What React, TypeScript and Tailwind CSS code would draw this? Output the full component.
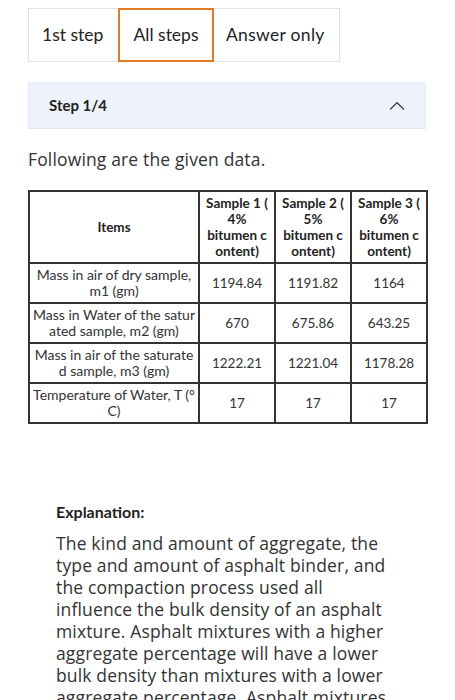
import React from "react";

const rows: [React.ReactNode, string, string, string][] = [
  [<>Mass in air of dry sample,<br />m1 (gm)</>, "1194.84", "1191.82", "1164"],
  [<>Mass in Water of the satur<br />ated sample, m2 (gm)</>, "670", "675.86", "643.25"],
  [<>Mass in air of the saturate<br />d sample, m3 (gm)</>, "1222.21", "1221.04", "1178.28"],
  [<>Temperature of Water, T (°<br />C)</>, "17", "17", "17"],
];

const heads = ["1", "2", "3"];
const pcts = ["4%", "5%", "6%"];

export default function App() {
  return (
    <div className="w-[455px] h-[700px] overflow-hidden bg-white text-[#333] font-['Lato','Open_Sans',sans-serif]">
      <div className="pt-2 pl-7">
        <div className="flex w-[312px] h-[54px] border border-[#e3e3e3]">
          <div className="w-[89px] flex items-center pl-[13px] text-[17.5px] text-[#222]">1st step</div>
          <div className="w-[96px] flex items-center justify-center text-[17.5px] text-[#222] border-2 border-[#e07a26] -my-px">All steps</div>
          <div className="flex-1 flex items-center pl-[12px] text-[17.5px] text-[#222] tracking-[0.3px]">Answer only</div>
        </div>
      </div>
      <div className="mt-5 ml-7 w-[398px] h-[47px] bg-[#eef2fc] border border-[#e6eaf4] flex items-center justify-between pl-5 pr-5">
        <span className="text-[15px] font-bold text-[#222]">Step 1/4</span>
        <svg width="16" height="10" viewBox="0 0 16 10" fill="none" stroke="#444" strokeWidth="1.4">
          <path d="M1 8.5 L8 1.8 L15 8.5" />
        </svg>
      </div>
      <p className="ml-7 mt-[19px] text-[17.5px] tracking-[0.15px] leading-[22px] text-[#333] font-['Open_Sans',sans-serif]">Following are the given data.</p>
      <table className="ml-7 mt-[20px] border-collapse text-[13.5px] leading-[16px] text-[#333] text-center w-[398px] table-fixed">
        <colgroup>
          <col className="w-[170px]" />
          <col className="w-[76px]" />
          <col className="w-[76px]" />
          <col className="w-[76px]" />
        </colgroup>
        <thead>
          <tr className="h-[72px]">
            <th className="border-2 border-[#333] font-bold text-[#222]">Items</th>
            {heads.map((h, i) => (
              <th key={h} className="border-2 border-[#333] font-bold text-[#222] px-0.5">
                Sample {h} (<br />{pcts[i]}<br />bitumen c<br />ontent)
              </th>
            ))}
          </tr>
        </thead>
        <tbody>
          {rows.map((r, i) => (
            <tr key={i} className="h-[40px]">
              <td className="border-2 border-[#333] px-0.5 text-[14px]">{r[0]}</td>
              <td className="border-2 border-[#333]">{r[1]}</td>
              <td className="border-2 border-[#333]">{r[2]}</td>
              <td className="border-2 border-[#333]">{r[3]}</td>
            </tr>
          ))}
        </tbody>
      </table>
      <div className="ml-14 mt-[78px] w-[380px]">
        <p className="text-[16px] font-bold text-[#222] leading-[20px]">Explanation:</p>
        <p className="mt-[10px] text-[17.5px] tracking-[0.15px] leading-[22px] text-[#333] font-['Open_Sans',sans-serif]">
          The kind and amount of aggregate, the<br />
          type and amount of asphalt binder, and<br />
          the compaction process used all<br />
          influence the bulk density of an asphalt<br />
          mixture. Asphalt mixtures with a higher<br />
          aggregate percentage will have a lower<br />
          bulk density than mixtures with a lower<br />
          aggregate percentage. Asphalt mixtures
        </p>
      </div>
    </div>
  );
}
